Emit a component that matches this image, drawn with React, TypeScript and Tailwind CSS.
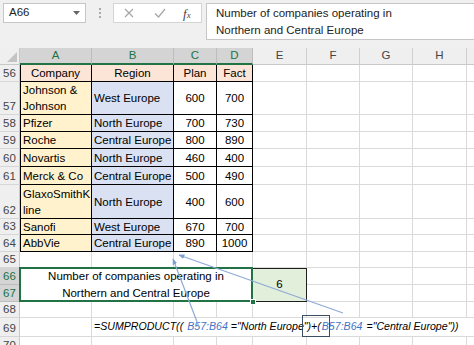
import React from "react";

type Kids = { children?: React.ReactNode };

// column widths
const A = "w-[72px]";
const B = "w-[82px]";
const C = "w-[43px]";
const D = "w-[36px]";
const REST = ["w-[54px]", "w-[53px]", "w-[53px]", "w-[54px]", "w-[60px]"];

const RowHead = ({ n, sel = false, h = "h-full" }: { n?: string; sel?: boolean; h?: string }) => (
  <div
    className={`w-[20px] shrink-0 ${h} border-r border-b flex items-end pb-[1px] pl-[3px] leading-[14px] ${
      sel
        ? "bg-[#d4d4d4] text-[#217346] border-r-[#217346] border-b-[#bdbdbd]"
        : "bg-[#efefef] text-[#444] border-r-[#c8c8c8] border-b-[#d6d6d6]"
    }`}
  >
    {n}
  </div>
);

const Empty = ({ w, h = "h-full" }: { w: string; h?: string }) => (
  <div className={`${w} shrink-0 ${h} border-r border-b border-[#dadada] bg-white`} />
);

const Rest = () => (
  <>
    {REST.map((w, i) => (
      <Empty key={i} w={w} />
    ))}
  </>
);

const T = ({ w, bg, className = "", children }: Kids & { w: string; bg: string; className?: string }) => (
  <div
    className={`${w} shrink-0 h-full border-r border-b border-black ${bg} flex items-center leading-[16px] ${className}`}
  >
    {children}
  </div>
);

const rows = [
  { n: "57", h: "h-[33px]", a: <>Johnson &amp;<br />Johnson</>, b: "West Europe", c: "600", d: "700" },
  { n: "58", h: "h-[17px]", a: "Pfizer", b: "North Europe", c: "700", d: "730" },
  { n: "59", h: "h-[17px]", a: "Roche", b: "Central Europe", c: "800", d: "890" },
  { n: "60", h: "h-[18px]", a: "Novartis", b: "North Europe", c: "460", d: "400" },
  { n: "61", h: "h-[18px]", a: "Merck & Co", b: "Central Europe", c: "500", d: "490" },
  { n: "62", h: "h-[34px]", a: <>GlaxoSmithK<br />line</>, b: "North Europe", c: "400", d: "600" },
  { n: "63", h: "h-[16px]", a: "Sanofi", b: "West Europe", c: "670", d: "700" },
  { n: "64", h: "h-[17px]", a: "AbbVie", b: "Central Europe", c: "890", d: "1000" },
];

const ColHead = ({ w, l, sel = false }: { w: string; l?: string; sel?: boolean }) => (
  <div
    className={`${w} shrink-0 h-full flex items-center justify-center border-r ${
      sel
        ? "bg-[#d4d4d4] text-[#217346] border-r-[#bdbdbd] border-b-2 border-b-[#217346]"
        : "bg-[#efefef] text-[#444] border-r-[#cfcfcf] border-b border-b-[#c8c8c8]"
    }`}
  >
    {l}
  </div>
);

const FormulaBar = () => (
  <div className="h-[48px] shrink-0 bg-[#f0f0f0] flex items-start pt-[3px] pl-[3px]">
    <div className="w-[83px] h-[20px] bg-white border border-[#c6c6c6] flex items-center justify-between pl-[5px] pr-[5px] text-[#222]">
      <span>A66</span>
      <svg width="7" height="4" viewBox="0 0 7 4">
        <path d="M0 0 L7 0 L3.5 4 Z" fill="#666" />
      </svg>
    </div>
    <div className="w-[27px] h-[20px] flex flex-col items-center justify-center gap-[2px]">
      <span className="w-[2px] h-[2px] bg-[#aaa]" />
      <span className="w-[2px] h-[2px] bg-[#aaa]" />
      <span className="w-[2px] h-[2px] bg-[#aaa]" />
    </div>
    <div className="w-[89px] h-[20px] bg-white border border-[#d4d4d4] flex items-center pl-[10px]">
      <svg width="10" height="10" viewBox="0 0 10 10">
        <path d="M1 1 L9 9 M9 1 L1 9" stroke="#a6a6a6" strokeWidth="1.2" />
      </svg>
      <svg width="12" height="10" viewBox="0 0 12 10" className="ml-[20px]">
        <path d="M1 5.5 L4.5 9 L11 1" stroke="#a6a6a6" strokeWidth="1.2" fill="none" />
      </svg>
      <span className="ml-[17px] italic font-['Liberation_Serif',serif] text-[13px] text-[#444] leading-none">
        f<span className="text-[9px]">x</span>
      </span>
    </div>
    <div className="ml-[4px] flex-1 h-[37px] bg-white border border-r-0 border-[#c6c6c6] pl-[9px] pt-[1px] leading-[17px] text-[#222] text-[11.5px]">
      Number of companies operating in
      <br />
      Northern and Central Europe
    </div>
  </div>
);

export default function App() {
  return (
    <div className="relative w-[474px] h-[345px] overflow-hidden bg-white font-['Liberation_Sans',Arial,sans-serif] text-[11.5px] text-black">
      <FormulaBar />

      {/* column headers */}
      <div className="flex h-[17px]">
        <div className="w-[20px] shrink-0 h-full bg-[#efefef] border-r border-b border-[#c8c8c8] flex items-end justify-end">
          <svg width="14" height="13" viewBox="0 0 14 13">
            <path d="M12 1 L12 11 L2 11 Z" fill="#c4c4c4" />
          </svg>
        </div>
        <ColHead w={A} l="A" sel />
        <ColHead w={B} l="B" sel />
        <ColHead w={C} l="C" sel />
        <ColHead w={D} l="D" sel />
        <ColHead w={REST[0]} l="E" />
        <ColHead w={REST[1]} l="F" />
        <ColHead w={REST[2]} l="G" />
        <ColHead w={REST[3]} l="H" />
        <ColHead w={REST[4]} />
      </div>

      {/* 56: table header */}
      <div className="flex h-[17px]">
        <RowHead n="56" />
        <T w={A} bg="bg-[#fce4d6] shadow-[inset_1px_0_0_#000]" className="justify-center">Company</T>
        <T w={B} bg="bg-[#fce4d6]" className="justify-center">Region</T>
        <T w={C} bg="bg-[#fce4d6]" className="justify-center">Plan</T>
        <T w={D} bg="bg-[#fce4d6]" className="justify-center">Fact</T>
        <Rest />
      </div>

      {rows.map((r) => (
        <div key={r.n} className={`flex ${r.h}`}>
          <RowHead n={r.n} />
          <T w={A} bg="bg-[#fff2cc] shadow-[inset_1px_0_0_#000]" className="px-[3px]">{r.a}</T>
          <T w={B} bg="bg-[#d9e1f2]" className="px-[2px] whitespace-nowrap">{r.b}</T>
          <T w={C} bg="bg-white" className="justify-center">{r.c}</T>
          <T w={D} bg="bg-white" className="justify-center">{r.d}</T>
          <Rest />
        </div>
      ))}

      {/* 65 */}
      <div className="flex h-[16px]">
        <RowHead n="65" />
        <Empty w={A} />
        <Empty w={B} />
        <Empty w={C} />
        <Empty w={D} />
        <Rest />
      </div>

      {/* 66-67 merged */}
      <div className="flex h-[34px]">
        <div className="w-[20px] shrink-0 flex flex-col">
          <RowHead n="66" sel h="h-[17px]" />
          <RowHead n="67" sel h="h-[17px]" />
        </div>
        <div className="relative w-[233px] shrink-0 h-full border-r border-b border-[#dadada] flex items-center justify-center text-center leading-[17px]">
          Number of companies operating in
          <br />
          Northern and Central Europe
          <div className="absolute -top-px -left-px -right-px -bottom-px border-2 border-[#217346] pointer-events-none" />
          <div className="absolute -right-[4px] -bottom-[4px] w-[6px] h-[6px] bg-[#217346] border border-white" />
        </div>
        <div className="w-[54px] shrink-0 h-full bg-[#e2efda] border-r border-b border-[#1f1f1f] shadow-[inset_0_1px_0_#1f1f1f] flex items-center justify-center">
          6
        </div>
        {REST.slice(1).map((w, i) => (
          <div key={i} className="flex flex-col">
            <Empty w={w} h="h-[17px]" />
            <Empty w={w} h="h-[17px]" />
          </div>
        ))}
      </div>

      {/* 68 */}
      <div className="flex h-[16px]">
        <RowHead n="68" />
        <Empty w={A} />
        <Empty w={B} />
        <Empty w={C} />
        <Empty w={D} />
        <Rest />
      </div>

      {/* 69 formula */}
      <div className="flex h-[19px]">
        <RowHead n="69" />
        <Empty w={A} />
        <div className="flex-1 h-full border-b border-[#dadada] flex items-center pl-[2px] whitespace-nowrap italic text-[10.6px]">
          <span>=SUMPRODUCT((</span>
          <span className="ml-[4px] text-[#4472c4]">B57:B64</span>
          <span className="ml-[3px]">="North Europe")+(</span>
          <span className="ml-[1px] text-[#4472c4]">B57:B64</span>
          <span className="ml-[4px]">="Central Europe"))</span>
        </div>
      </div>

      {/* 70 */}
      <div className="flex h-[17px]">
        <RowHead n="70" />
        <Empty w={A} />
        <Empty w={B} />
        <Empty w={C} />
        <Empty w={D} />
        <Rest />
      </div>

      {/* precedent arrows and highlighted token */}
      <svg className="absolute inset-0 pointer-events-none" width="474" height="345">
        <defs>
          <marker id="ah" viewBox="0 0 10 10" refX="9" refY="5" markerWidth="5" markerHeight="5" orient="auto">
            <path d="M0 1 L10 5 L0 9 Z" fill="#7f9fcf" />
          </marker>
        </defs>
        <line x1="343" y1="313" x2="179" y2="255" stroke="#8eaad6" strokeWidth="1.2" markerEnd="url(#ah)" />
        <line x1="199" y1="327" x2="173" y2="259" stroke="#8eaad6" strokeWidth="1.2" markerEnd="url(#ah)" />
        <rect x="302.5" y="315.5" width="27" height="21" fill="none" stroke="#3b4e66" />
      </svg>
    </div>
  );
}
